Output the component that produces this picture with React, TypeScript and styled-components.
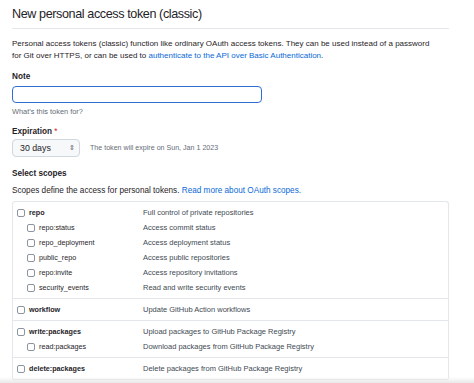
import React from 'react';
import styled, { createGlobalStyle } from 'styled-components';

const GlobalStyle = createGlobalStyle`
  html, body {
    margin: 0;
    padding: 0;
    background: #ffffff;
    font-family: "Liberation Sans", Arial, sans-serif;
    color: #1f2328;
  }
`;

const Page = styled.div`
  width: 474px;
  height: 383px;
  overflow: hidden;
  position: relative;
  padding: 0 25px 0 12px;
  box-sizing: border-box;
`;

const Title = styled.h1`
  margin: 4px 0 0;
  font-size: 12.6px;
  letter-spacing: -0.4px;
  font-weight: 400;
  line-height: 20px;
  padding-bottom: 4px;
  border-bottom: 1px solid #e3e6ea;
`;

const Intro = styled.p`
  margin: 9px 0 0;
  font-size: 8px;
  line-height: 12px;
  white-space: nowrap;
`;

const Link = styled.a`
  color: #0969da;
  text-decoration: none;
`;

const Label = styled.div<{ $top: number }>`
  margin-top: ${p => p.$top}px;
  font-size: 8.2px;
  font-weight: 700;
  line-height: 12px;
`;

const Required = styled.span`
  color: #cf222e;
  font-weight: 400;
`;

const TextInput = styled.div`
  margin-top: 3px;
  width: 250px;
  height: 17px;
  border: 1.5px solid #2f6fd1;
  border-radius: 4px;
  box-sizing: border-box;
`;

const Hint = styled.div`
  margin-top: 4px;
  font-size: 7.4px;
  line-height: 10px;
  color: #656d76;
`;

const SelectRow = styled.div`
  margin-top: 1px;
  display: flex;
  align-items: center;
  gap: 10px;
`;

const Select = styled.div`
  width: 68px;
  height: 18px;
  border: 1px solid #d0d7de;
  border-radius: 4px;
  box-sizing: border-box;
  display: flex;
  align-items: center;
  justify-content: space-between;
  padding: 0 4px 0 7px;
  font-size: 8.8px;
  background: #f6f8fa;
`;

const Caret = styled.span`
  font-size: 7px;
  color: #57606a;
`;

const Muted = styled.span`
  font-size: 7.1px;
  color: #656d76;
`;

const Desc = styled.p`
  margin: 5px 0 0;
  font-size: 8.2px;
  line-height: 12px;
`;

const ScopeBox = styled.div`
  margin-top: 4px;
  border: 1px solid #e3e6ea;
  border-radius: 3px;
  border-bottom: none;
`;

const Group = styled.div`
  padding: 3px 0;
  border-bottom: 1px solid #e3e6ea;
`;

const Row = styled.div`
  display: grid;
  grid-template-columns: 126px 1fr;
  align-items: center;
  height: 15px;
  padding-left: 4px;
`;

const Cell = styled.label<{ $sub?: boolean }>`
  display: flex;
  align-items: center;
  gap: 4px;
  padding-left: ${p => (p.$sub ? '10px' : '0')};
  font-size: 7.2px;
  font-weight: ${p => (p.$sub ? 400 : 700)};
  color: #1f2328;
`;

const Box = styled.span`
  width: 8px;
  height: 8px;
  border: 1px solid #8c959f;
  border-radius: 2px;
  box-sizing: border-box;
  flex: none;
`;

const Note = styled.span`
  font-size: 7.5px;
  color: #424a53;
`;

const Fade = styled.div`
  position: absolute;
  left: 0;
  right: 0;
  bottom: 0;
  height: 6px;
  background: linear-gradient(to bottom, rgba(240,240,240,0), rgba(230,230,230,0.9));
`;

type Scope = { name: string; note: string; sub?: boolean };

const groups: Scope[][] = [
  [
    { name: 'repo', note: 'Full control of private repositories' },
    { name: 'repo:status', note: 'Access commit status', sub: true },
    { name: 'repo_deployment', note: 'Access deployment status', sub: true },
    { name: 'public_repo', note: 'Access public repositories', sub: true },
    { name: 'repo:invite', note: 'Access repository invitations', sub: true },
    { name: 'security_events', note: 'Read and write security events', sub: true },
  ],
  [{ name: 'workflow', note: 'Update GitHub Action workflows' }],
  [
    { name: 'write:packages', note: 'Upload packages to GitHub Package Registry' },
    { name: 'read:packages', note: 'Download packages from GitHub Package Registry', sub: true },
  ],
  [{ name: 'delete:packages', note: 'Delete packages from GitHub Package Registry' }],
];

export default function App() {
  return (
    <>
      <GlobalStyle />
      <Page>
        <Title>New personal access token (classic)</Title>
        <Intro>
          Personal access tokens (classic) function like ordinary OAuth access tokens. They can be used instead of a password
          <br />
          for Git over HTTPS, or can be used to <Link>authenticate to the API over Basic Authentication</Link>.
        </Intro>
        <Label $top={9}>Note</Label>
        <TextInput />
        <Hint>What’s this token for?</Hint>
        <Label $top={9}>
          Expiration <Required>*</Required>
        </Label>
        <SelectRow>
          <Select>
            30 days <Caret>⇕</Caret>
          </Select>
          <Muted>The token will expire on Sun, Jan 1 2023</Muted>
        </SelectRow>
        <Label $top={11}>Select scopes</Label>
        <Desc>
          Scopes define the access for personal tokens. <Link>Read more about OAuth scopes.</Link>
        </Desc>
        <ScopeBox>
          {groups.map((g, gi) => (
            <Group key={gi}>
              {g.map(s => (
                <Row key={s.name}>
                  <Cell $sub={s.sub}>
                    <Box />
                    {s.name}
                  </Cell>
                  <Note>{s.note}</Note>
                </Row>
              ))}
            </Group>
          ))}
        </ScopeBox>
        <Fade />
      </Page>
    </>
  );
}
